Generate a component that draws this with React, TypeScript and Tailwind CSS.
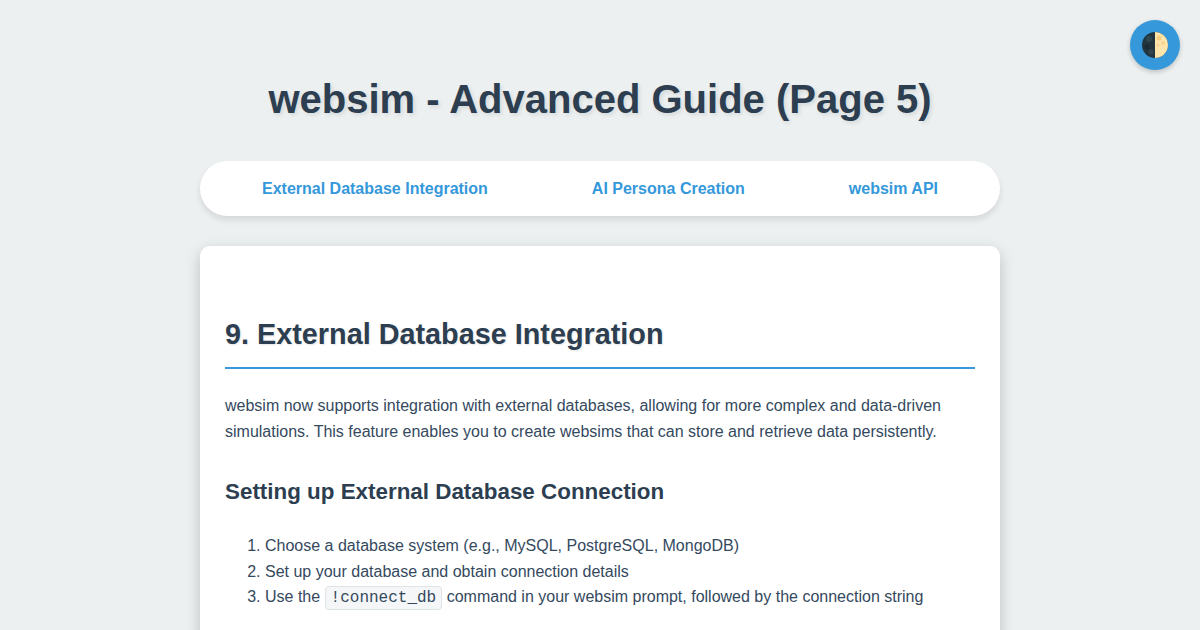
function MoonIcon() {
  return (
    <svg width="26" height="26" viewBox="0 0 26 26">
      <circle cx="13" cy="13" r="13" fill="#22353f" />
      <circle cx="7" cy="7" r="3" fill="#2f4650" />
      <circle cx="5" cy="15" r="2.5" fill="#1b2b33" />
      <circle cx="9" cy="20" r="2.5" fill="#2f4650" />
      <path d="M13 0a13 13 0 0 1 0 26z" fill="#fde5ab" />
      <circle cx="17" cy="6" r="2.5" fill="#f8cf7e" />
      <circle cx="21" cy="11" r="2" fill="#f9d690" />
      <circle cx="16" cy="13" r="1.5" fill="#f9d690" />
    </svg>
  );
}

export default function App() {
  return (
    <div className="h-[630px] overflow-hidden bg-[#ecf0f1] font-['Liberation_Sans',Arial,sans-serif] text-[16px] leading-[1.6] text-[#34495e]">
      <button className="absolute right-5 top-5 flex h-[50px] w-[50px] items-center justify-center rounded-full bg-[#3498db] shadow-[0_2px_5px_rgba(0,0,0,0.2)]">
        <MoonIcon />
      </button>
      <div className="mx-auto w-[800px] pt-5">
        <h1 className="mb-[30px] mt-[47px] text-center text-[40px] font-bold leading-[64px] text-[#2c3e50] [text-shadow:2px_2px_4px_rgba(0,0,0,0.1)]">
          websim - Advanced Guide (Page 5)
        </h1>
        <nav className="mb-[30px] flex h-[55px] items-center justify-around rounded-[30px] bg-white px-2.5 shadow-[0_4px_6px_rgba(0,0,0,0.1)]">
          <a className="font-bold text-[#3498db]">External Database Integration</a>
          <a className="font-bold text-[#3498db]">AI Persona Creation</a>
          <a className="font-bold text-[#3498db]">websim API</a>
        </nav>
        <main className="rounded-[10px] bg-white px-[25px] pb-[60px] pt-[25px] shadow-[0_5px_15px_rgba(0,0,0,0.2)]">
          <h2 className="mt-[24px] border-b-2 border-[#3498db] pb-[10px] pt-[16px] text-[28.8px] font-bold leading-[46px] text-[#2c3e50] [text-shadow:1px_1px_2px_rgba(0,0,0,0.1)]">
            9. External Database Integration
          </h2>
          <p className="mt-[24px]">
            websim now supports integration with external databases, allowing for more complex and data-driven simulations. This feature enables you to create websims that can store and retrieve data persistently.
          </p>
          <h3 className="mt-[30px] text-[22.4px] font-bold leading-[36px] text-[#2c3e50]">Setting up External Database Connection</h3>
          <ol className="mt-[23px] list-decimal pl-10">
            <li>Choose a database system (e.g., MySQL, PostgreSQL, MongoDB)</li>
            <li>Set up your database and obtain connection details</li>
            <li>
              Use the{" "}
              <code className="rounded-[4px] border border-[#dfe4e6] bg-[#f4f6f7] px-[5px] py-[2px] font-['Liberation_Mono',monospace] text-[16px]">!connect_db</code>{" "}
              command in your websim prompt, followed by the connection string
            </li>
          </ol>
        </main>
      </div>
    </div>
  );
}
